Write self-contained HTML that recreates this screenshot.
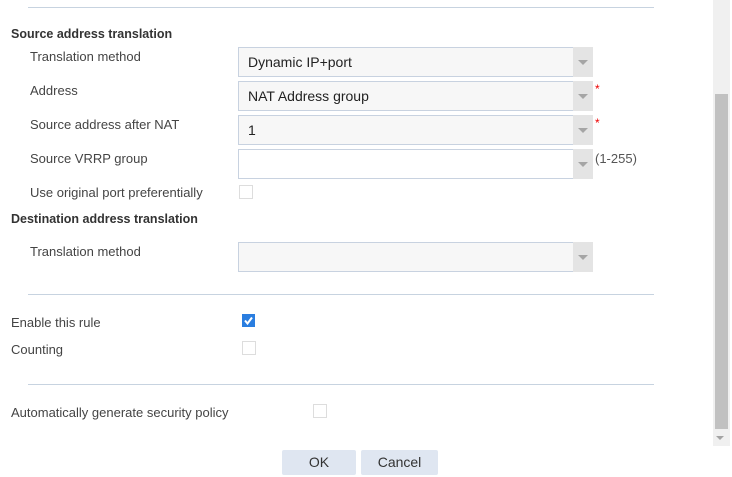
<!DOCTYPE html>
<html><head><style>
body{margin:0;width:732px;height:477px;background:#fff;font-family:"Liberation Sans",Arial,sans-serif;position:relative;overflow:hidden;color:#333}
.a{position:absolute}
.t{font-size:13px;color:#444;white-space:nowrap}
.h{font-size:12.5px;font-weight:bold;color:#333;white-space:nowrap}
.line{position:absolute;height:1px;background:#c7d3e0}
.sel{position:absolute;left:238px;height:28px;border:1px solid #c8d2e0;background:#f7f7f7;font-size:14px;color:#222;line-height:28px;box-sizing:content-box;padding-left:9px;width:325px}
.btn{position:absolute;left:573px;width:20px;height:30px;background:#e4e4e4}
.btn:after{content:"";position:absolute;left:5px;top:13px;border-left:5px solid transparent;border-right:5px solid transparent;border-top:5px solid #a5a5a5}
.cb{position:absolute;width:12px;height:12px;border:1px solid #ddd;background:#fff}
.star{position:absolute;color:#e00;font-size:12px;left:595px}
.b{position:absolute;top:450px;height:25px;background:#dfe6f1;border-radius:2px;font-size:14px;color:#333;text-align:center;line-height:25px}
</style></head><body>
<div class="line" style="left:28px;top:7px;width:626px"></div>
<div class="a h" style="left:11px;top:27px">Source address translation</div>
<div class="a t" style="left:30px;top:49px">Translation method</div>
<div class="a t" style="left:30px;top:83px">Address</div>
<div class="a t" style="left:30px;top:117px">Source address after NAT</div>
<div class="a t" style="left:30px;top:151px">Source VRRP group</div>
<div class="a t" style="left:30px;top:185px">Use original port preferentially</div>
<div class="a h" style="left:11px;top:212px">Destination address translation</div>
<div class="a t" style="left:30px;top:244px">Translation method</div>

<div class="sel" style="top:47px">Dynamic IP+port</div><div class="btn" style="top:47px"></div>
<div class="sel" style="top:81px">NAT Address group</div><div class="btn" style="top:81px"></div><div class="star" style="top:82px">*</div>
<div class="sel" style="top:115px">1</div><div class="btn" style="top:115px"></div><div class="star" style="top:116px">*</div>
<div class="sel" style="top:149px;background:#fff"></div><div class="btn" style="top:149px"></div>
<div class="a t" style="left:595px;top:151px;color:#555">(1-255)</div>
<div class="cb" style="left:239px;top:185px"></div>
<div class="sel" style="top:242px"></div><div class="btn" style="top:242px"></div>

<div class="line" style="left:28px;top:294px;width:626px"></div>
<div class="a t" style="left:11px;top:315px">Enable this rule</div>
<div class="a" style="left:242px;top:314px;width:13px;height:13px;background:#2a7ee0"><svg width="13" height="13"><path d="M3 6.5 L5.5 9.5 L10 3.5" stroke="#fff" stroke-width="2" fill="none"/></svg></div>
<div class="a t" style="left:11px;top:342px">Counting</div>
<div class="cb" style="left:242px;top:341px"></div>
<div class="line" style="left:28px;top:384px;width:626px"></div>
<div class="a t" style="left:11px;top:405px">Automatically generate security policy</div>
<div class="cb" style="left:313px;top:404px"></div>

<div class="b" style="left:282px;width:74px">OK</div>
<div class="b" style="left:361px;width:77px">Cancel</div>

<div class="a" style="left:713px;top:0;width:17px;height:446px;background:#f0f0f0"></div>
<div class="a" style="left:715px;top:94px;width:13px;height:335px;background:#c1c1c1"></div>
<div class="a" style="left:716px;top:436px;border-left:4px solid transparent;border-right:4px solid transparent;border-top:4px solid #a3a3a3"></div>
</body></html>
